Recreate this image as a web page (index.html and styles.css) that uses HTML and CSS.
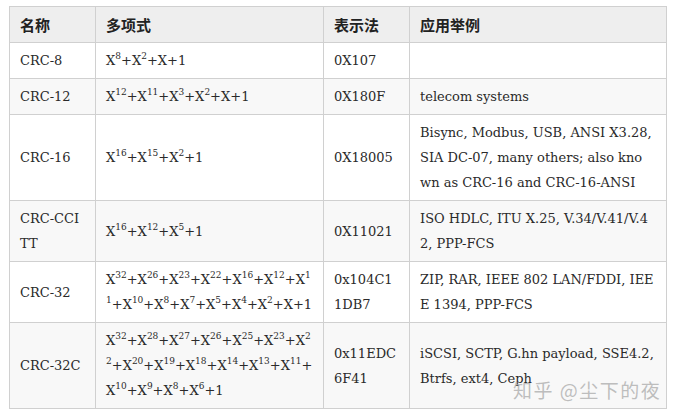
FILE: index.html
```html
<!DOCTYPE html>
<html lang="zh">
<head>
<meta charset="utf-8">
<link rel="stylesheet" href="styles.css">
</head>
<body>
<div class="page">
  <table class="crc">
    <colgroup>
      <col class="c1"><col class="c2"><col class="c3"><col class="c4">
    </colgroup>
    <thead>
      <tr><th>名称</th><th>多项式</th><th>表示法</th><th>应用举例</th></tr>
    </thead>
    <tbody>
      <tr><td>CRC-8</td><td>X<sup>8</sup>+X<sup>2</sup>+X+1</td><td>0X107</td><td class="app"></td></tr>
      <tr class="alt"><td>CRC-12</td><td>X<sup>12</sup>+X<sup>11</sup>+X<sup>3</sup>+X<sup>2</sup>+X+1</td><td>0X180F</td><td class="app">telecom systems</td></tr>
      <tr><td>CRC-16</td><td>X<sup>16</sup>+X<sup>15</sup>+X<sup>2</sup>+1</td><td>0X18005</td><td class="app tight">Bisync, Modbus, USB, ANSI X3.28, SIA DC-07, many others; also known as CRC-16 and CRC-16-ANSI</td></tr>
      <tr class="alt"><td>CRC-CCITT</td><td>X<sup>16</sup>+X<sup>12</sup>+X<sup>5</sup>+1</td><td>0X11021</td><td class="app">ISO HDLC, ITU X.25, V.34/V.41/V.42, PPP-FCS</td></tr>
      <tr><td>CRC-32</td><td>X<sup>32</sup>+X<sup>26</sup>+X<sup>23</sup>+X<sup>22</sup>+X<sup>16</sup>+X<sup>12</sup>+X<sup>11</sup>+X<sup>10</sup>+X<sup>8</sup>+X<sup>7</sup>+X<sup>5</sup>+X<sup>4</sup>+X<sup>2</sup>+X+1</td><td>0x104C11DB7</td><td class="app">ZIP, RAR, IEEE 802 LAN/FDDI, IEEE 1394, PPP-FCS</td></tr>
      <tr class="alt"><td>CRC-32C</td><td>X<sup>32</sup>+X<sup>28</sup>+X<sup>27</sup>+X<sup>26</sup>+X<sup>25</sup>+X<sup>23</sup>+X<sup>22</sup>+X<sup>20</sup>+X<sup>19</sup>+X<sup>18</sup>+X<sup>14</sup>+X<sup>13</sup>+X<sup>11</sup>+X<sup>10</sup>+X<sup>9</sup>+X<sup>8</sup>+X<sup>6</sup>+1</td><td>0x11EDC6F41</td><td class="app">iSCSI, SCTP, G.hn payload, SSE4.2, Btrfs, ext4, Ceph</td></tr>
    </tbody>
  </table>
  <div class="watermark">知乎 @尘下的夜</div>
</div>
</body>
</html>
```

FILE: styles.css
```css
html, body {
  margin: 0;
  padding: 0;
  background: #ffffff;
}
.page {
  position: relative;
  padding: 6px 0 0 9px;
}
.crc {
  border-collapse: collapse;
  table-layout: fixed;
  width: 657px;
  font-family: "DejaVu Serif", "Noto Sans CJK SC", serif;
  font-size: 13px;
  color: #2a2a2a;
}
.c1 { width: 86px; }
.c2 { width: 228px; }
.c3 { width: 86px; }
.c4 { width: 257px; }
.crc th, .crc td {
  border: 1px solid #d0d0d0;
  padding: 5px 9px 5px 10px;
  line-height: 25px;
  text-align: left;
  vertical-align: middle;
  word-break: break-all;
}
.crc td.app {
  padding-right: 12px;
}
.crc td.app.tight {
  padding-right: 14px;
}
.crc th {
  background: #eeeeee;
  font-family: "Noto Sans CJK SC", sans-serif;
  font-weight: bold;
  font-size: 15px;
  color: #222;
}
.crc tr.alt td {
  background: #f8f8f8;
}
.crc sup {
  font-size: 9px;
  line-height: 0;
  vertical-align: 6px;
}
.watermark {
  position: absolute;
  left: 513px;
  top: 376px;
  font-family: "Noto Sans CJK SC", sans-serif;
  font-size: 19px;
  color: rgba(170, 170, 170, 0.75);
  letter-spacing: 1.5px;
}
```
